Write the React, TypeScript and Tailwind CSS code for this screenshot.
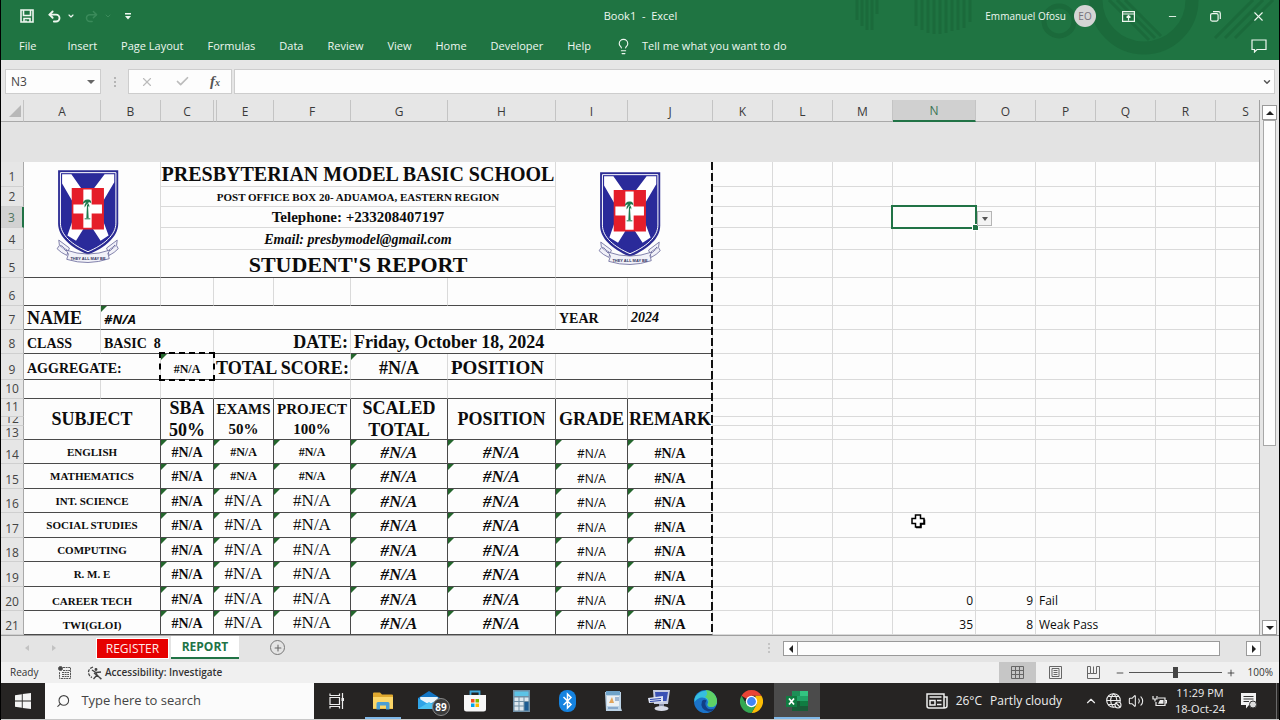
import type { ReactNode } from 'react';
import { ChevronDown, ChevronUp, Check, X, Search, Minus, Plus, Undo2, Redo2, Lightbulb, Volume2 } from 'lucide-react';

const LIGHT = 'border-b-[#dadada]';
const DARK = 'border-b-[#4a4a4a]';
const R_LIGHT = 'border-r border-r-[#dadada]';
const R_DARK = 'border-r border-r-[#4a4a4a]';
const SERIF = "font-['Liberation_Serif',serif]";

const columns = [
  { name: 'A', width: 'w-[77px]' },
  { name: 'B', width: 'w-[60px]' },
  { name: 'C', width: 'w-[53px]' },
  { name: '', width: 'w-[3px]' },
  { name: 'E', width: 'w-[57px]' },
  { name: 'F', width: 'w-[77px]' },
  { name: 'G', width: 'w-[97px]' },
  { name: 'H', width: 'w-[108px]' },
  { name: 'I', width: 'w-[72px]' },
  { name: 'J', width: 'w-[85px]' },
  { name: 'K', width: 'w-[60px]' },
  { name: 'L', width: 'w-[60px]' },
  { name: 'M', width: 'w-[60px]' },
  { name: 'N', width: 'w-[83px]' },
  { name: 'O', width: 'w-[60px]' },
  { name: 'P', width: 'w-[60px]' },
  { name: 'Q', width: 'w-[60px]' },
  { name: 'R', width: 'w-[60px]' },
  { name: 'S', width: 'w-[60px]' },
];

const subjects = [
  { name: 'ENGLISH', row: 14, height: 'h-[24px]' },
  { name: 'MATHEMATICS', row: 15, height: 'h-[25px]' },
  { name: 'INT. SCIENCE', row: 16, height: 'h-[24px]' },
  { name: 'SOCIAL STUDIES', row: 17, height: 'h-[25px]' },
  { name: 'COMPUTING', row: 18, height: 'h-[24px]' },
  { name: 'R. M. E', row: 19, height: 'h-[25px]' },
  { name: 'CAREER TECH', row: 20, height: 'h-[24px]' },
  { name: 'TWI(GLOI)', row: 21, height: 'h-[24px]' },
];

const menu = ['Insert', 'Page Layout', 'Formulas', 'Data', 'Review', 'View', 'Home', 'Developer', 'Help'];

interface CellProps {
  children?: ReactNode;
  span?: number;
  rows?: number;
  right?: string;
  bottom?: string;
  error?: boolean;
  className?: string;
}

function Cell({ children, span = 1, rows = 1, right = R_LIGHT, bottom = DARK, error = false, className = '' }: CellProps) {
  return (
    <td
      colSpan={span}
      rowSpan={rows}
      className={`relative border-b p-0 leading-[18px] whitespace-nowrap ${right} ${bottom} ${className}`}
    >
      {error && <span className="absolute top-0 left-0 border-t-[6px] border-r-[6px] border-t-[#24662d] border-r-transparent" />}
      {children}
    </td>
  );
}

interface RowNumberProps {
  n: number;
  height: string;
  leading?: string;
  active?: boolean;
}

function RowNumber({ n, height, leading = 'leading-[18px]', active = false }: RowNumberProps) {
  return (
    <th scope="row" className="p-0 font-['Open_Sans',sans-serif] font-normal">
      <div
        className={`flex items-end justify-center overflow-hidden border-r border-b border-b-[#cfcfcf] text-[12px] ${leading} ${height} ${
          active ? 'border-r-2 border-r-[#217346] bg-[#d2d2d2] text-[#4f7560]' : 'border-r-[#a9a9a9] bg-[#e6e6e6] text-[#444]'
        }`}
      >
        {n}
      </div>
    </th>
  );
}

function Blank({ count }: { count: number }) {
  return (
    <>
      {Array.from({ length: count }, (_, i) => (
        <Cell key={i} bottom={LIGHT} />
      ))}
    </>
  );
}

function Crest() {
  return (
    <svg viewBox="170 148 192 286" className="h-[95px] w-[64px]" role="img" aria-label="School crest">
      <path d="M176 152H357V312C357 352 318 384 266 406C214 384 176 352 176 312Z" fill="#2b2b93" />
      <path d="M183 159H350V311C350 347 313 377 266 397C219 377 183 347 183 311Z" fill="#2a2a9a" stroke="#fff" strokeWidth="3" />
      <path d="M188 164H216L264 232L316 164H345V188L298 268L328 348L304 364L266 306L230 364L204 348L232 268L188 192Z" fill="#fff" />
      <path d="M224 165H306L266 232ZM188 200L226 262L204 343Q188 328 188 308ZM345 200V308Q345 328 328 343L304 262ZM266 318L296 368Q284 380 266 388Q248 380 236 368Z" fill="#2a2a9a" />
      <path d="M217 205H314V330H217Z" fill="#e51e2a" />
      <path d="M252 210H277V255H308V282H277V325H252V282H222V255H252Z" fill="#fff" />
      <path d="M263 256L266 256L268 296H261ZM264 240Q276 238 276 252Q270 246 266 250Q272 256 270 264Q264 258 264 252Q260 258 256 264Q254 254 261 249Q254 248 250 254Q252 240 264 240Z" fill="#1c7a4c" />
      <path d="M256 298H273" stroke="#1c7a4c" strokeWidth="3" />
      <g fill="#f1f1f8" stroke="#6a6a9c" strokeWidth="2.5">
        <path d="M178 362L210 386L202 408Q184 400 173 388L180 378Z" />
        <path d="M354 362L322 386L330 408Q346 400 357 388L352 378Z" />
        <path d="M200 392Q266 416 332 392L326 402L330 418Q266 440 202 420L207 404Z" />
      </g>
      <path d="M183 378L202 394M348 378L330 394" stroke="#5c5c93" strokeWidth="5" strokeDasharray="3 2" />
      <text x="266" y="421" textAnchor="middle" fontSize="12" fontWeight="bold" fill="#33335f" fontFamily="Liberation Sans, sans-serif">
        THEY ALL MAY BE
      </text>
    </svg>
  );
}

function TitleBar() {
  return (
    <header className="relative bg-[#1f7442] text-[11px] font-medium text-[#eef7f0]">
      <svg className="absolute top-0 right-0 h-[60px] w-[430px]" viewBox="850 0 430 60" aria-hidden="true">
        <g stroke="#1b6a3b" fill="none">
          <path d="M858 0V20M863 0V26M868 0V30M873 0V30M878 0V14M917 0V26M923 0V30M929 0V33M935 0V34M941 0V34M947 0V33M953 0V31M959 0V30M965 0V28M971 0V22" strokeWidth="3" />
          <circle cx="1060" cy="21" r="15" strokeWidth="5" />
          <circle cx="1145" cy="0" r="48" strokeWidth="13" />
          <path d="M1110 0L1150 40M1118 0L1156 38M1126 0L1162 36M1216 38L1254 0M1226 38L1264 0M1236 38L1274 0" strokeWidth="3" />
        </g>
      </svg>
      <div className="relative flex h-[32px] items-center">
        <div className="flex flex-1 items-center pl-[19px]">
          <button aria-label="Save">
            <svg width="14" height="14" viewBox="0 0 14 14" fill="none" stroke="currentColor" strokeWidth="1.6">
              <path d="M1 1H13V13H1ZM3.5 1V6.5H10.5V1M4 13V9.500H10V13M6 13V11.500" />
            </svg>
          </button>
          <button aria-label="Undo" className="ml-[13px] flex items-center gap-[5px]">
            <Undo2 size={15} strokeWidth={3} />
            <ChevronDown size={8} strokeWidth={3.5} />
          </button>
          <button aria-label="Redo" className="ml-[9px] flex items-center gap-[5px] text-[#3a8a5a]">
            <Redo2 size={15} strokeWidth={2.4} />
            <ChevronDown size={8} strokeWidth={3} />
          </button>
          <button aria-label="Customize Quick Access Toolbar" className="ml-[12px]">
            <svg width="8" height="7" viewBox="0 0 8 7" fill="currentColor">
              <path d="M1 0H7V1.4H1ZM1 3H7L4 6.5Z" />
            </svg>
          </button>
        </div>
        <h1 className="pr-[18px] whitespace-pre">Book1  -  Excel</h1>
        <div className="flex flex-1 items-center justify-end">
          <span className="text-[10px]">Emmanuel Ofosu</span>
          <span className="ml-2 flex size-[22px] items-center justify-center rounded-full bg-[#d5d5d5] text-[10px] text-[#77727c]">EO</span>
          <button aria-label="Ribbon display options" className="ml-[26px]">
            <svg width="13" height="11" viewBox="0 0 13 11" fill="none" stroke="currentColor" strokeWidth="1.2">
              <path d="M.6 .6H12.400V10.400H.6ZM.6 3H12.400M6.500 9.500V4.500M4.500 6.500L6.500 4.500L8.500 6.500" />
            </svg>
          </button>
          <button aria-label="Minimize" className="ml-[32px]"><Minus size={11} /></button>
          <button aria-label="Restore" className="ml-[32px]">
            <svg width="11" height="11" viewBox="0 0 11 11" fill="none" stroke="currentColor" strokeWidth="1.2">
              <rect x=".6" y="2.600" width="7.500" height="7.500" rx="1.500" />
              <path d="M3 .7H8.500Q10.300 .7 10.300 2.500V8" />
            </svg>
          </button>
          <button aria-label="Close" className="mr-[13px] ml-[30px]"><X size={15} strokeWidth={1.8} /></button>
        </div>
      </div>
      <nav className="relative flex h-[28px] items-center pl-[18px]">
        <button className="mr-[31px]">File</button>
        <div className="flex gap-[24px]">
          {menu.map((item) => (
            <button key={item}>{item}</button>
          ))}
        </div>
        <Lightbulb size={17} strokeWidth={1.6} className="ml-[24px]" />
        <button className="ml-[10px]">Tell me what you want to do</button>
        <button aria-label="Comments" className="mr-3 ml-auto">
          <svg width="16" height="14" viewBox="0 0 16 14" fill="none" stroke="currentColor" strokeWidth="1.2">
            <path d="M1 1H15V10.500H6L3.500 13V10.500H1Z" />
          </svg>
        </button>
      </nav>
    </header>
  );
}

function FormulaBar() {
  return (
    <div className="flex h-[40px] items-start bg-[#e6e6e6] pt-[9px] pr-[4px] pl-[4px]">
      <div className="flex h-[25px] w-[96px] items-center border border-[#cdcdcd] bg-[#fdfdfd] px-[5px]">
        <input aria-label="Name Box" defaultValue="N3" className="w-full min-w-0 bg-transparent text-[12px] text-[#444] outline-none" />
        <button aria-label="Show names" className="shrink-0 border-x-[4px] border-t-[4px] border-x-transparent border-t-[#666]" />
      </div>
      <div className="flex h-[25px] w-[27px] flex-col items-center justify-center gap-[2px]">
        <i className="size-[2px] bg-[#b5b5b5]" />
        <i className="size-[2px] bg-[#b5b5b5]" />
        <i className="size-[2px] bg-[#b5b5b5]" />
      </div>
      <div className="flex h-[25px] w-[104px] items-center justify-between border border-[#cdcdcd] bg-[#fdfdfd] px-[11px]">
        <button aria-label="Cancel" className="text-[#bcbcbc]"><X size={14} /></button>
        <button aria-label="Enter" className="text-[#bcbcbc]"><Check size={15} strokeWidth={2.8} /></button>
        <button aria-label="Insert function" className={`text-[15px] leading-none font-bold text-[#555] italic ${SERIF}`}>
          f<span className="text-[10px]">x</span>
        </button>
      </div>
      <div className="ml-[2px] flex h-[25px] flex-1 items-center border border-[#cdcdcd] bg-[#fdfdfd] pr-[2px]">
        <input aria-label="Formula" className="min-w-0 flex-1 bg-transparent px-1 text-[12px] outline-none" />
        <button aria-label="Expand formula bar" className="text-[#555]"><ChevronDown size={10} strokeWidth={3.5} /></button>
      </div>
    </div>
  );
}

function Sheet() {
  return (
    <div className="flex bg-[#e6e6e6]">
      <div className="relative min-w-0 flex-1 overflow-hidden border-r border-[#a0a0a0]">
        <table className="w-full min-w-[1275px] table-fixed border-separate border-spacing-0 bg-[#fdfdfd] text-[#0c0c0c]">
          <colgroup>
            <col className="w-[23px]" />
            {columns.map((c) => (
              <col key={c.width + c.name} className={c.width} />
            ))}
          </colgroup>
          <thead>
            <tr className="h-[22px] bg-[#e6e6e6] text-[12px] text-[#3a3a3a]">
              <td className="border-r border-b border-r-[#c4c4c4] border-b-[#a9a9a9] p-0">
                <svg width="12" height="12" viewBox="0 0 12 12" className="ml-2">
                  <path d="M12 0V12H0Z" fill="#b8b8b8" />
                </svg>
              </td>
              {columns.map((c) => (
                <th
                  key={c.width + c.name}
                  scope="col"
                  className={`border-r border-r-[#c4c4c4] p-0 pt-[2px] leading-[18px] font-medium ${
                    c.name === 'N' ? 'border-b-2 border-b-[#217346] bg-[#d0d0d0] text-[#3c7556]' : 'border-b border-b-[#a9a9a9]'
                  }`}
                >
                  {c.name}
                </th>
              ))}
            </tr>
          </thead>
          <tbody className={SERIF}>
            <tr className="h-[40px]">
              <td colSpan={20} className="bg-[#e3e3e3] p-0" />
            </tr>
            <tr>
              <RowNumber n={1} height="h-[25px]" />
              <Cell span={2} rows={5}>
                <div className="flex justify-center pr-[8px] pb-[6px]"><Crest /></div>
              </Cell>
              <Cell span={6} bottom={LIGHT} className="text-center text-[20px] font-bold">
                <div className="flex justify-center">PRESBYTERIAN MODEL BASIC SCHOOL</div>
              </Cell>
              <Cell span={2} rows={5}>
                <div className="flex justify-center pr-[8px] pb-[2px]"><Crest /></div>
              </Cell>
              <Blank count={9} />
            </tr>
            <tr>
              <RowNumber n={2} height="h-[20px]" />
              <Cell span={6} bottom={LIGHT} className="text-center text-[11px] font-bold">POST OFFICE BOX 20- ADUAMOA, EASTERN REGION</Cell>
              <Blank count={9} />
            </tr>
            <tr>
              <RowNumber n={3} height="h-[21px]" active />
              <Cell span={6} bottom={LIGHT} className="text-center text-[15px] font-bold">Telephone: +233208407197</Cell>
              <Blank count={3} />
              <Cell bottom={LIGHT}>
                <div className="absolute -top-[2px] -right-[2px] -bottom-[2px] -left-[2px] z-10 border-2 border-[#217346]">
                  <span className="absolute -right-[3px] -bottom-[3px] size-[5px] bg-[#217346] outline outline-white" />
                  <button
                    aria-label="Open list"
                    className="absolute top-[4px] left-full ml-[2px] flex size-[15px] items-center justify-center border border-[#b5b5b5] bg-[#f4f4f4]"
                  >
                    <span className="border-x-[3px] border-t-[4px] border-x-transparent border-t-[#555]" />
                  </button>
                </div>
              </Cell>
              <Blank count={5} />
            </tr>
            <tr>
              <RowNumber n={4} height="h-[22px]" />
              <Cell span={6} bottom={LIGHT} className="pt-[3px] text-center text-[14px] font-bold italic">Email: presbymodel@gmail.com</Cell>
              <Blank count={9} />
            </tr>
            <tr>
              <RowNumber n={5} height="h-[28px]" />
              <Cell span={6} className="pt-[2px] text-center text-[22px] font-bold">STUDENT&apos;S REPORT</Cell>
              <Blank count={9} />
            </tr>
            <tr>
              <RowNumber n={6} height="h-[28px]" />
              <Cell />
              <Cell />
              <Cell />
              <Cell span={2} />
              <Cell />
              <Cell />
              <Cell />
              <Cell />
              <Cell />
              <Blank count={9} />
            </tr>
            <tr>
              <RowNumber n={7} height="h-[24px]" />
              <Cell className="pl-[3px] text-[18px] font-bold">NAME</Cell>
              <Cell span={7} error className="pt-[2px] pl-[3px] font-['Open_Sans',sans-serif] text-[13px] font-bold italic">#N/A</Cell>
              <Cell className="pt-[2px] pl-[3px] text-[14px] font-bold">YEAR</Cell>
              <Cell className="pl-[3px] text-[14px] font-bold italic">2024</Cell>
              <Blank count={9} />
            </tr>
            <tr>
              <RowNumber n={8} height="h-[24px]" />
              <Cell className="pt-[4px] pl-[3px] text-[14px] font-bold">CLASS</Cell>
              <Cell span={2} className="pt-[4px] pl-[3px] text-[14px] font-bold whitespace-pre">BASIC  8</Cell>
              <Cell span={3} className="pr-[2px] text-right text-[18px] font-bold">DATE:</Cell>
              <Cell span={4} className="pl-[3px] text-[18px] font-bold">Friday, October 18, 2024</Cell>
              <Blank count={9} />
            </tr>
            <tr>
              <RowNumber n={9} height="h-[26px]" />
              <Cell span={2} className="pt-[4px] pl-[3px] text-[14px] font-bold">AGGREGATE:</Cell>
              <Cell error className="pt-[4px] text-center text-[12px] font-bold">
                #N/A
                <span className="absolute -top-[2px] -right-[2px] -bottom-[2px] -left-[2px] z-10 border-2 border-dashed border-black" />
              </Cell>
              <Cell span={3} className="pt-[2px] pl-[2px] text-[18px] font-bold">TOTAL SCORE:</Cell>
              <Cell error className="pt-[2px] text-center text-[18px] font-bold">#N/A</Cell>
              <Cell className="pt-[2px] pl-[3px] text-[19px] font-bold">POSITION</Cell>
              <Cell span={2} />
              <Blank count={9} />
            </tr>
            <tr>
              <RowNumber n={10} height="h-[19px]" />
              <Cell />
              <Cell />
              <Cell />
              <Cell span={2} />
              <Cell />
              <Cell />
              <Cell />
              <Cell />
              <Cell />
              <Blank count={9} />
            </tr>
            <tr>
              <RowNumber n={11} height="h-[18px]" />
              <Cell span={2} rows={3} right={R_DARK} className="text-center text-[18px] font-bold">SUBJECT</Cell>
              <Cell rows={3} right={R_DARK} className="text-center text-[18px] font-bold">
                <div className="flex h-[38px] flex-col items-center justify-center leading-[22px]">
                  <span>SBA</span>
                  <span>50%</span>
                </div>
              </Cell>
              <Cell span={2} rows={3} right={R_DARK} className="text-center text-[15px] font-bold">
                <div className="flex h-[38px] flex-col items-center justify-center leading-[20px]">
                  <span>EXAMS</span>
                  <span>50%</span>
                </div>
              </Cell>
              <Cell rows={3} right={R_DARK} className="text-center text-[15px] font-bold">
                <div className="flex h-[38px] flex-col items-center justify-center leading-[20px]">
                  <span>PROJECT</span>
                  <span>100%</span>
                </div>
              </Cell>
              <Cell rows={3} right={R_DARK} className="text-center text-[18px] font-bold">
                <div className="flex h-[38px] flex-col items-center justify-center leading-[22px]">
                  <span>SCALED</span>
                  <span>TOTAL</span>
                </div>
              </Cell>
              <Cell rows={3} right={R_DARK} className="text-center text-[18px] font-bold">POSITION</Cell>
              <Cell rows={3} right={R_DARK} className="text-center text-[18px] font-bold">GRADE</Cell>
              <Cell rows={3} className="text-center text-[18px] font-bold">REMARK</Cell>
              <Blank count={9} />
            </tr>
            <tr>
              <RowNumber n={12} height="h-[9px]" leading="leading-[12px]" />
              <Blank count={9} />
            </tr>
            <tr>
              <RowNumber n={13} height="h-[14px]" leading="leading-[13px]" />
              <Blank count={9} />
            </tr>
            {subjects.map((s) => {
              const marks = s.row > 15 ? 'text-[17px]' : 'text-[12px] font-bold';
              return (
                <tr key={s.row}>
                  <RowNumber n={s.row} height={s.height} leading="leading-[16px]" />
                  <Cell
                    span={2}
                    right={R_DARK}
                    className={`text-center text-[11px] font-bold ${s.row > 19 ? 'align-bottom' : 'align-middle'}`}
                  >
                    {s.name}
                  </Cell>
                  <Cell error right={R_DARK} className="pt-[2px] text-center text-[14px] font-bold">#N/A</Cell>
                  <Cell error span={2} right={R_DARK} className={`text-center ${marks}`}>#N/A</Cell>
                  <Cell error right={R_DARK} className={`text-center ${marks}`}>#N/A</Cell>
                  <Cell error right={R_DARK} className="pt-[2px] text-center text-[17px] font-bold italic">#N/A</Cell>
                  <Cell error right={R_DARK} className="pt-[2px] text-center text-[17px] font-bold italic">#N/A</Cell>
                  <Cell error right={R_DARK} className="pt-[5px] text-center font-['Open_Sans',sans-serif] text-[12px]">#N/A</Cell>
                  <Cell error className="pt-[5px] text-center text-[14px] font-bold">#N/A</Cell>
                  {s.row < 20 && <Blank count={9} />}
                  {s.row >= 20 && (
                    <>
                      <Blank count={3} />
                      <Cell bottom={LIGHT} className="pt-[5px] pr-[2px] text-right font-['Open_Sans',sans-serif] text-[12px]">
                        {s.row === 20 ? '0' : '35'}
                      </Cell>
                      <Cell bottom={LIGHT} className="pt-[5px] pr-[2px] text-right font-['Open_Sans',sans-serif] text-[12px]">
                        {s.row === 20 ? '9' : '8'}
                      </Cell>
                      <Cell
                        span={s.row === 20 ? 1 : 2}
                        bottom={LIGHT}
                        className="pt-[5px] pl-[3px] font-['Open_Sans',sans-serif] text-[12px]"
                      >
                        {s.row === 20 ? 'Fail' : 'Weak Pass'}
                      </Cell>
                      <Blank count={s.row === 20 ? 3 : 2} />
                    </>
                  )}
                </tr>
              );
            })}
          </tbody>
        </table>
        {/* print area edge */}
        <div className="absolute top-[62px] bottom-0 left-[710px] w-[2px] bg-[repeating-linear-gradient(to_bottom,#111_0_8px,transparent_8px_11px)]" />
        {/* sheet cursor */}
        <svg className="absolute top-[413px] left-[909px]" width="16" height="16" viewBox="0 0 16 16" aria-hidden="true">
          <path d="M5.500 2H10.500V5.500H14V10.500H10.500V14H5.500V10.500H2V5.500H5.500Z" fill="#fff" stroke="#000" strokeWidth="1.5" />
          <path d="M11 11.500V14.500H6M14.500 6.500V11H11" fill="none" stroke="#000" strokeWidth="1.5" />
        </svg>
      </div>
      <div className="flex w-[19px] flex-col items-center pt-[5px]">
        <button aria-label="Scroll up" className="flex size-[15px] shrink-0 items-center justify-center border border-[#9a9a9a] bg-white">
          <span className="border-x-[4px] border-b-[4px] border-x-transparent border-b-[#222]" />
        </button>
        <div className="w-[13px] flex-[65] border border-[#a8a8a8] bg-[#fdfdfd]" />
        <div className="flex-[35]" />
        <button aria-label="Scroll down" className="flex size-[15px] shrink-0 items-center justify-center border border-[#9a9a9a] bg-white">
          <span className="border-x-[4px] border-t-[4px] border-x-transparent border-t-[#222]" />
        </button>
      </div>
    </div>
  );
}

function SheetTabs() {
  return (
    <div className="flex h-[27px] items-start border-t border-[#9f9f9f] bg-[#e4e4e4] pl-[24px]">
      <button aria-label="Previous sheet" className="mt-[9px] border-y-[3px] border-r-[4px] border-y-transparent border-r-[#c2c2c2]" />
      <button aria-label="Next sheet" className="mt-[9px] ml-[23px] border-y-[3px] border-l-[4px] border-y-transparent border-l-[#c2c2c2]" />
      <button className="mt-[2px] ml-[40px] h-[21px] w-[73px] border border-white bg-[#e60000] text-[12px] leading-[18px] text-[#ffe9e9]">REGISTER</button>
      <button className="ml-[2px] h-[23px] w-[68px] border-b-2 border-[#217346] bg-white text-[12px] font-bold text-[#217346]">REPORT</button>
      <button aria-label="New sheet" className="mt-[4px] ml-[31px] flex size-[15px] items-center justify-center rounded-full border border-[#777] text-[#666]">
        <Plus size={10} strokeWidth={2.5} />
      </button>
      <div className="mt-[7px] ml-auto flex flex-col gap-[2px] pr-[13px]">
        <i className="size-[2px] bg-[#c4c4c4]" />
        <i className="size-[2px] bg-[#c4c4c4]" />
        <i className="size-[2px] bg-[#c4c4c4]" />
      </div>
      <div className="mt-[5px] mr-[18px] flex w-[478px] items-stretch">
        <button aria-label="Scroll left" className="flex size-[15px] items-center justify-center border border-[#9a9a9a] bg-white">
          <span className="border-y-[4px] border-r-[4px] border-y-transparent border-r-[#222]" />
        </button>
        <div className="mr-[26px] flex-1 border border-l-0 border-[#9a9a9a] bg-[#fdfdfd]" />
        <button aria-label="Scroll right" className="flex size-[15px] items-center justify-center border border-[#9a9a9a] bg-white">
          <span className="border-y-[4px] border-l-[4px] border-y-transparent border-l-[#222]" />
        </button>
      </div>
    </div>
  );
}

function StatusBar() {
  return (
    <div className="flex h-[21px] items-center bg-[#f0f0f0] text-[10px] text-[#333]">
      <span className="w-[48px] pl-[9px]">Ready</span>
      <svg className="ml-[9px]" width="13" height="13" viewBox="0 0 13 13" fill="none" stroke="#555">
        <path d="M5 1.500H12.500V12.500H1.500V6M5 4.500H12.500M4 6.500H11M4 8.500H11M4 10.500H11" strokeDasharray="2 .6" />
        <circle cx="2.500" cy="2.500" r="2" fill="#444" />
      </svg>
      <button className="ml-[16px] flex items-center gap-[2px] font-semibold">
        <svg width="16" height="14" viewBox="0 0 16 14" fill="none" stroke="#444" strokeWidth="1.3">
          <path d="M6 1Q1 3 1.500 7Q2 10 5 11.500" strokeDasharray="3 1.200" />
          <path d="M5 4L9 6.500L14 6M9 6.500L10 9L14 13M10 9L6.500 13M7 7L14.500 13" />
          <circle cx="9" cy="3.500" r=".8" fill="#444" />
        </svg>
        Accessibility: Investigate
      </button>
      <div className="ml-auto flex h-full items-center">
        <button aria-label="Normal view" className="flex h-full w-[37px] items-center justify-center bg-[#c6c6c6]">
          <svg width="13" height="13" viewBox="0 0 13 13" fill="none" stroke="#666">
            <path d="M.5 .5H12.500V12.500H.5ZM.5 4.500H12.500M.5 8.500H12.500M4.500 .5V12.500M8.500 .5V12.500" />
          </svg>
        </button>
        <button aria-label="Page layout view" className="flex w-[38px] justify-center">
          <svg width="13" height="13" viewBox="0 0 13 13" fill="none" stroke="#666">
            <path d="M.5 .5H12.500V12.500H.5ZM3 2.500H10V10.500H3ZM4.500 4.500H8.500M4.500 6.500H8.500M4.500 8.500H8.500" />
          </svg>
        </button>
        <button aria-label="Page break preview" className="flex w-[38px] justify-center">
          <svg width="13" height="13" viewBox="0 0 13 13" fill="none" stroke="#666">
            <path d="M.5 .5V12.500H12.500V.5M.5 .5H3.500V7.500H9.500V.5H12.500M6.500 .5V7.500M.5 7.500H3.500" />
          </svg>
        </button>
        <button aria-label="Zoom out" className="ml-[3px]"><Minus size={10} /></button>
        <input
          type="range"
          aria-label="Zoom"
          defaultValue={50}
          className="mx-[4px] h-[11px] w-[93px] appearance-none bg-[linear-gradient(#555,#555)] bg-[length:100%_1px] bg-center bg-no-repeat [&::-webkit-slider-thumb]:h-[11px] [&::-webkit-slider-thumb]:w-[5px] [&::-webkit-slider-thumb]:appearance-none [&::-webkit-slider-thumb]:bg-[#444]"
        />
        <button aria-label="Zoom in"><Plus size={10} /></button>
        <span className="w-[43px] pr-[6px] text-right">100%</span>
      </div>
    </div>
  );
}

function TaskButton({ label, active = false, open = false, children }: { label: string; active?: boolean; open?: boolean; children: ReactNode }) {
  return (
    <button aria-label={label} className={`relative flex h-full w-[46px] items-center justify-center ${active ? 'bg-[#4b4b4b]' : ''}`}>
      {children}
      {(active || open) && <span className={`absolute bottom-0 h-[2px] bg-[#7fb8e8] ${active ? 'inset-x-0' : 'inset-x-[5px]'}`} />}
    </button>
  );
}

function Taskbar() {
  return (
    <footer className="flex h-[37px] items-center border-b border-[#c9c9c9] bg-[#262423] text-[#eee]">
      <button aria-label="Start" className="flex h-full w-[44px] items-center justify-center">
        <svg width="16" height="16" viewBox="0 0 16 16" fill="#f4f4f4">
          <path d="M0 2.200L6.800 1.200V7.500H0ZM7.700 1.100L16 0V7.500H7.700ZM0 8.400H6.800V14.800L0 13.800ZM7.700 8.400H16V16L7.700 14.900Z" />
        </svg>
      </button>
      <label className="flex h-full w-[269px] items-center bg-[#fbfbfb] pl-[11px] text-[#444]">
        <Search size={16} strokeWidth={1.8} className="-scale-x-100" />
        <input aria-label="Search" placeholder="Type here to search" className="ml-[11px] w-full bg-transparent text-[13px] outline-none placeholder:text-[#444]" />
      </label>
      <TaskButton label="Task View">
        <svg width="16" height="16" viewBox="0 0 16 16" fill="none" stroke="#eee" strokeWidth="1.2">
          <path d="M1 4.500H10.500V11.500H1ZM1 .5V2.500H10.500V.5M1 15.500V13.500H10.500V15.500M13.500 0V16" />
          <path d="M12.500 5H15V8H12.500Z" fill="#eee" stroke="none" />
        </svg>
      </TaskButton>
      <TaskButton label="File Explorer" open>
        <svg width="20" height="18" viewBox="0 0 20 18">
          <path d="M0 1.500Q0 .5 1 .5H7L9 2.500H19Q20 2.500 20 3.500V17H0Z" fill="#e0a92f" />
          <path d="M0 5H20V16.500H0Z" fill="#fbd668" />
          <path d="M3.500 17.500V11.500Q3.500 10 5 10H15Q16.500 10 16.500 11.500V17.500H13V13.500H7V17.500Z" fill="#4a9fd4" />
        </svg>
      </TaskButton>
      <TaskButton label="Mail">
        <svg width="22" height="20" viewBox="0 0 20 20" preserveAspectRatio="none">
          <path d="M0 7L10 0L20 7V18H0Z" fill="#1275c4" />
          <path d="M2 6H18V12H2Z" fill="#e9f4fb" />
          <path d="M0 7L10 13.500L20 7V18H0Z" fill="#2fa4e7" />
          <path d="M0 18L10 11L20 18Z" fill="#4cc2f1" />
        </svg>
        <span className="absolute top-[15px] left-[26px] flex size-[18px] items-center justify-center rounded-full border border-[#8a8a8a] bg-[#3b3b3b] text-[10px] font-bold text-white">89</span>
      </TaskButton>
      <TaskButton label="Microsoft Store">
        <svg width="22" height="22" viewBox="0 0 22 22">
          <path d="M6.500 6V1.500H15.500V6" fill="none" stroke="#3fa7dc" strokeWidth="1.8" />
          <path d="M0 5H22V19Q22 21.500 19.500 21.500H2.500Q0 21.500 0 19Z" fill="#f7f7f7" />
          <path d="M7 9H10.500V12.500H7Z" fill="#f25022" />
          <path d="M11.500 9H15V12.500H11.500Z" fill="#7fba00" />
          <path d="M7 13.500H10.500V17H7Z" fill="#00a4ef" />
          <path d="M11.500 13.500H15V17H11.500Z" fill="#ffb900" />
        </svg>
      </TaskButton>
      <TaskButton label="Calculator">
        <svg width="17" height="22" viewBox="0 0 17 22">
          <path d="M0 0H17V22H0Z" fill="#6f8fa5" />
          <path d="M1.500 1.500H15.500V6H1.500Z" fill="#5cc3e6" />
          <path d="M1.500 7.500H5.500V11H1.500ZM6.500 7.500H10.500V11H6.500ZM11.500 7.500H15.500V11H11.500ZM1.500 12H5.500V15.500H1.500ZM6.500 12H10.500V15.500H6.500ZM1.500 16.500H5.500V20.500H1.500ZM6.500 16.500H10.500V20.500H6.500Z" fill="#dde7ee" />
          <path d="M11.500 12H15.500V20.500H11.500Z" fill="#1c5c93" />
        </svg>
      </TaskButton>
      <TaskButton label="Bluetooth">
        <svg width="17" height="22" viewBox="0 0 17 22">
          <rect width="17" height="22" rx="8" fill="#1583e0" />
          <path d="M4.500 7L12 14.500L8.500 18V4L12 7.500L4.500 15" fill="none" stroke="#fff" strokeWidth="1.5" />
        </svg>
      </TaskButton>
      <TaskButton label="WordPad">
        <svg width="17" height="20" viewBox="0 0 17 20">
          <path d="M0 1H16V17L17 20H1Z" fill="#bcd3e6" />
          <path d="M1 0H15V4H1Z" fill="#6fa3c9" />
          <path d="M2 5H14V15H2Z" fill="#eaf0f4" />
          <path d="M4 12L7 6L9 12Z" fill="#e2a55c" />
          <path d="M10 7H14M10 9H14M3 17H13" stroke="#557fb0" />
        </svg>
      </TaskButton>
      <TaskButton label="Remote Desktop">
        <svg width="22" height="22" viewBox="0 0 22 22">
          <path d="M5 0H22L20 14H6Z" fill="#c5cbe0" />
          <path d="M7 2H20L18.500 11H8Z" fill="#3a51b5" />
          <path d="M0 8L15 6V12L1 13Z" fill="#dfe5f5" />
          <path d="M2 9.500L13 8.500M2 11.500L13 10.500" stroke="#2740a8" strokeWidth="1.2" />
          <path d="M11 14H16V17H11Z" fill="#8e95ad" />
          <ellipse cx="13.500" cy="18.500" rx="7" ry="2.500" fill="#d7dae6" />
        </svg>
      </TaskButton>
      <TaskButton label="Edge">
        <svg width="23" height="23" viewBox="0 0 23 23">
          <circle cx="11.500" cy="11.500" r="11.500" fill="#1b74c9" />
          <path d="M.5 9A11.500 11.500 0 0 1 23 11Q23 17 17 17Q13 17 13.500 14Q15 10 11 8Q5 6 .5 12Z" fill="#35bfe0" />
          <path d="M11.500 0A11.500 11.500 0 0 1 23 11Q23 16.500 17.500 17Q13 17 13.800 14Q16 9 11 7Q15 4 11.500 0Z" fill="#5fd265" />
          <path d="M8 11Q5.500 19 14 21.500Q18 22 21 18.500Q13 21 11.500 15Q11 12.500 12.500 10.500Q10 9 8 11Z" fill="#123f86" />
        </svg>
      </TaskButton>
      <TaskButton label="Chrome">
        <svg width="23" height="23" viewBox="0 0 24 24">
          <path d="M12 0A12 12 0 0 1 22.400 6H12L6.800 9L1.600 6A12 12 0 0 1 12 0Z" fill="#ea4335" />
          <path d="M22.400 6A12 12 0 0 1 12 24L17.200 15L16 6Z" fill="#fbbc05" />
          <path d="M1.600 6A12 12 0 0 0 12 24L17.200 15H6.800Z" fill="#34a853" />
          <circle cx="12" cy="12" r="6" fill="#fff" />
          <circle cx="12" cy="12" r="4.600" fill="#4285f4" />
        </svg>
      </TaskButton>
      <TaskButton label="Excel" active>
        <svg width="22" height="20" viewBox="0 0 22 20">
          <path d="M6 0H22V20H6Z" fill="#21a366" />
          <path d="M6 0H14V5H6Z" fill="#1d8f57" />
          <path d="M14 0H22V5H14Z" fill="#33c481" />
          <path d="M6 10H22V20H6Z" fill="#185c37" />
          <path d="M14 10H22V15H14Z" fill="#107c41" />
          <path d="M0 5H11V16H0Z" fill="#107c41" />
          <path d="M3 7.500L8 13.500M8 7.500L3 13.500" stroke="#fff" strokeWidth="1.8" />
        </svg>
      </TaskButton>
      <div className="ml-auto flex h-full items-center text-[12px]">
        <button className="flex items-center gap-[8px]">
          <svg width="22" height="16" viewBox="0 0 22 16" fill="none" stroke="#eee" strokeWidth="1.5">
            <path d="M1 1H18V15H3Q1 15 1 13ZM18 4H21V13Q21 15 18 15M3.500 4H15.500M4 7.500H9V12H4ZM11 7.500H15.500M11 11.500H15.500" />
          </svg>
          <span>26°C</span>
          <span>Partly cloudy</span>
        </button>
        <button aria-label="Show hidden icons" className="ml-[22px]"><ChevronUp size={14} /></button>
        <svg className="ml-[8px]" width="16" height="16" viewBox="0 0 16 16" fill="none" stroke="#eee" strokeWidth="1.1">
          <circle cx="7.500" cy="7.500" r="6.800" />
          <path d="M.7 7.500H14.300M2 3.500H13M2 11.500H9M7.500 .7Q1.500 7.500 7.500 14.300M7.500 .7Q11 4 10.800 8" />
          <circle cx="12" cy="12" r="3" fill="#262423" />
          <path d="M10 10L14 14" />
        </svg>
        <Volume2 size={16} strokeWidth={1.6} className="ml-[6px]" />
        <svg className="ml-[8px]" width="15" height="12" viewBox="0 0 15 12" fill="none" stroke="#eee" strokeWidth="1.2">
          <path d="M6 3H13V10.500H4V7M13.500 5.500H14.500V8H13.500M1 1V4H5V1M3 4V6.500" />
          <path d="M8 5H11.500V8.800H6Z" fill="#eee" stroke="none" />
        </svg>
        <div className="ml-[8px] w-[50px] text-center text-[11px] leading-[16px] whitespace-nowrap">
          <div>11:29 PM</div>
          <div>18-Oct-24</div>
        </div>
        <button aria-label="Notifications" className="ml-[16px]">
          <svg width="16" height="16" viewBox="0 0 16 16">
            <path d="M0 0H15V12H8L5 15.500V12H0Z" fill="#f2f2f2" />
            <path d="M2.500 3.500H12.500M2.500 6H12.500M2.500 8.500H8" stroke="#333" />
            <circle cx="12" cy="11.500" r="3.500" fill="#ddd" stroke="#333" />
          </svg>
        </button>
        <span className="mr-[2px] ml-[19px] h-full w-px bg-[#6a6a6a]" />
      </div>
    </footer>
  );
}

export default function App() {
  return (
    <div className="flex min-h-screen flex-col border-x border-black bg-[#e6e6e6] font-['Open_Sans',sans-serif]">
      <TitleBar />
      <FormulaBar />
      <Sheet />
      <SheetTabs />
      <StatusBar />
      <Taskbar />
    </div>
  );
}
